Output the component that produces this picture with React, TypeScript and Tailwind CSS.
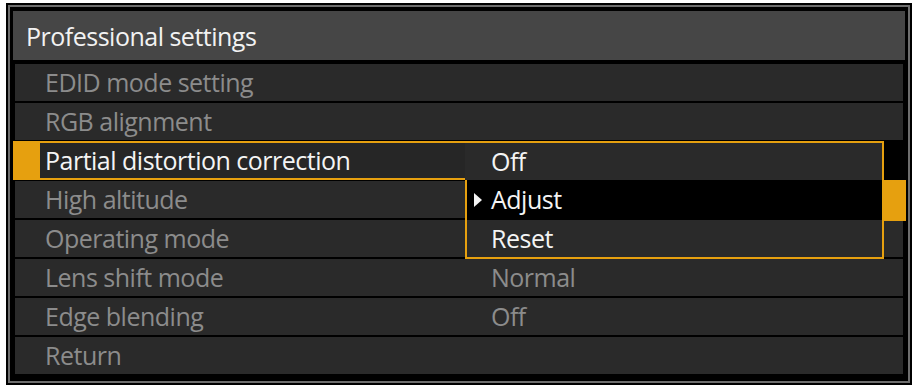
const items = [
  { label: 'EDID mode setting', value: '' },
  { label: 'RGB alignment', value: '' },
  { label: 'Partial distortion correction', value: '', active: true },
  { label: 'High altitude', value: '' },
  { label: 'Operating mode', value: '' },
  { label: 'Lens shift mode', value: 'Normal' },
  { label: 'Edge blending', value: 'Off' },
  { label: 'Return', value: '' },
];

const options = ['Off', 'Adjust', 'Reset'];

export default function App() {
  return (
    <div
      className="relative min-h-screen bg-white pt-[3px] pl-[6px]"
      style={{ fontFamily: '"Open Sans", "Noto Sans", sans-serif' }}
    >
      <div className="w-[906px] h-[382px] bg-black p-[2px]">
        <div className="h-full border-2 border-[#6e6e6e] bg-black px-[3px] pt-[4px]">
          {/* header */}
          <div className="h-[49px] bg-[#464646] flex items-center pl-[13px] pt-[2px] text-[25px] tracking-[-0.5px] text-[#f2f2f2]">
            Professional settings
          </div>

          {/* rows */}
          <div className="mt-[4px] flex flex-col gap-[2px]">
            {items.map((item) =>
              item.active ? (
                <div key={item.label} className="-my-[1px] h-[39px] flex">
                  <div className="w-[25px] bg-[#e6a00f]" />
                  <div className="w-[427px] flex items-center border-y-2 border-l-2 border-[#e6a00f] bg-[#262626] pl-[5px] text-[25px] tracking-[-0.5px] text-[#f4f4f4]">
                    {item.label}
                  </div>
                </div>
              ) : (
                <div
                  key={item.label}
                  className="mx-[2px] h-[37px] flex items-center bg-[#2a2a2a] text-[25px] tracking-[-0.5px] text-[#8c8c8c]"
                >
                  <div className="w-[476px] pl-[30px]">{item.label}</div>
                  <div>{item.value}</div>
                </div>
              )
            )}
          </div>
        </div>
      </div>

      {/* pull-down list */}
      <div className="absolute left-[465px] top-[141px] w-[419px] h-[118px] border-y-2 border-r-2 border-[#e6a00f] flex flex-col text-[25px] tracking-[-0.5px] text-[#f4f4f4]">
        {options.map((opt) =>
          opt === 'Off' ? (
            <div key={opt} className="h-[37px] flex items-center bg-[#2a2a2a] pl-[26px]">
              {opt}
            </div>
          ) : (
            <div
              key={opt}
              className={`${opt === 'Adjust' ? 'h-[40px] bg-black' : 'h-[37px] bg-[#2a2a2a]'} flex items-center border-l-2 border-[#e6a00f] pl-[24px] relative`}
            >
              {opt === 'Adjust' && (
                <svg className="absolute left-[7px] top-[13px]" width="8" height="14" viewBox="0 0 8 14">
                  <path d="M0 0 L8 7 L0 14 Z" fill="#f4f4f4" />
                </svg>
              )}
              {opt}
            </div>
          )
        )}
      </div>
      <div className="absolute left-[884px] top-[180px] w-[22px] h-[41px] bg-[#e6a00f]" />
    </div>
  );
}
